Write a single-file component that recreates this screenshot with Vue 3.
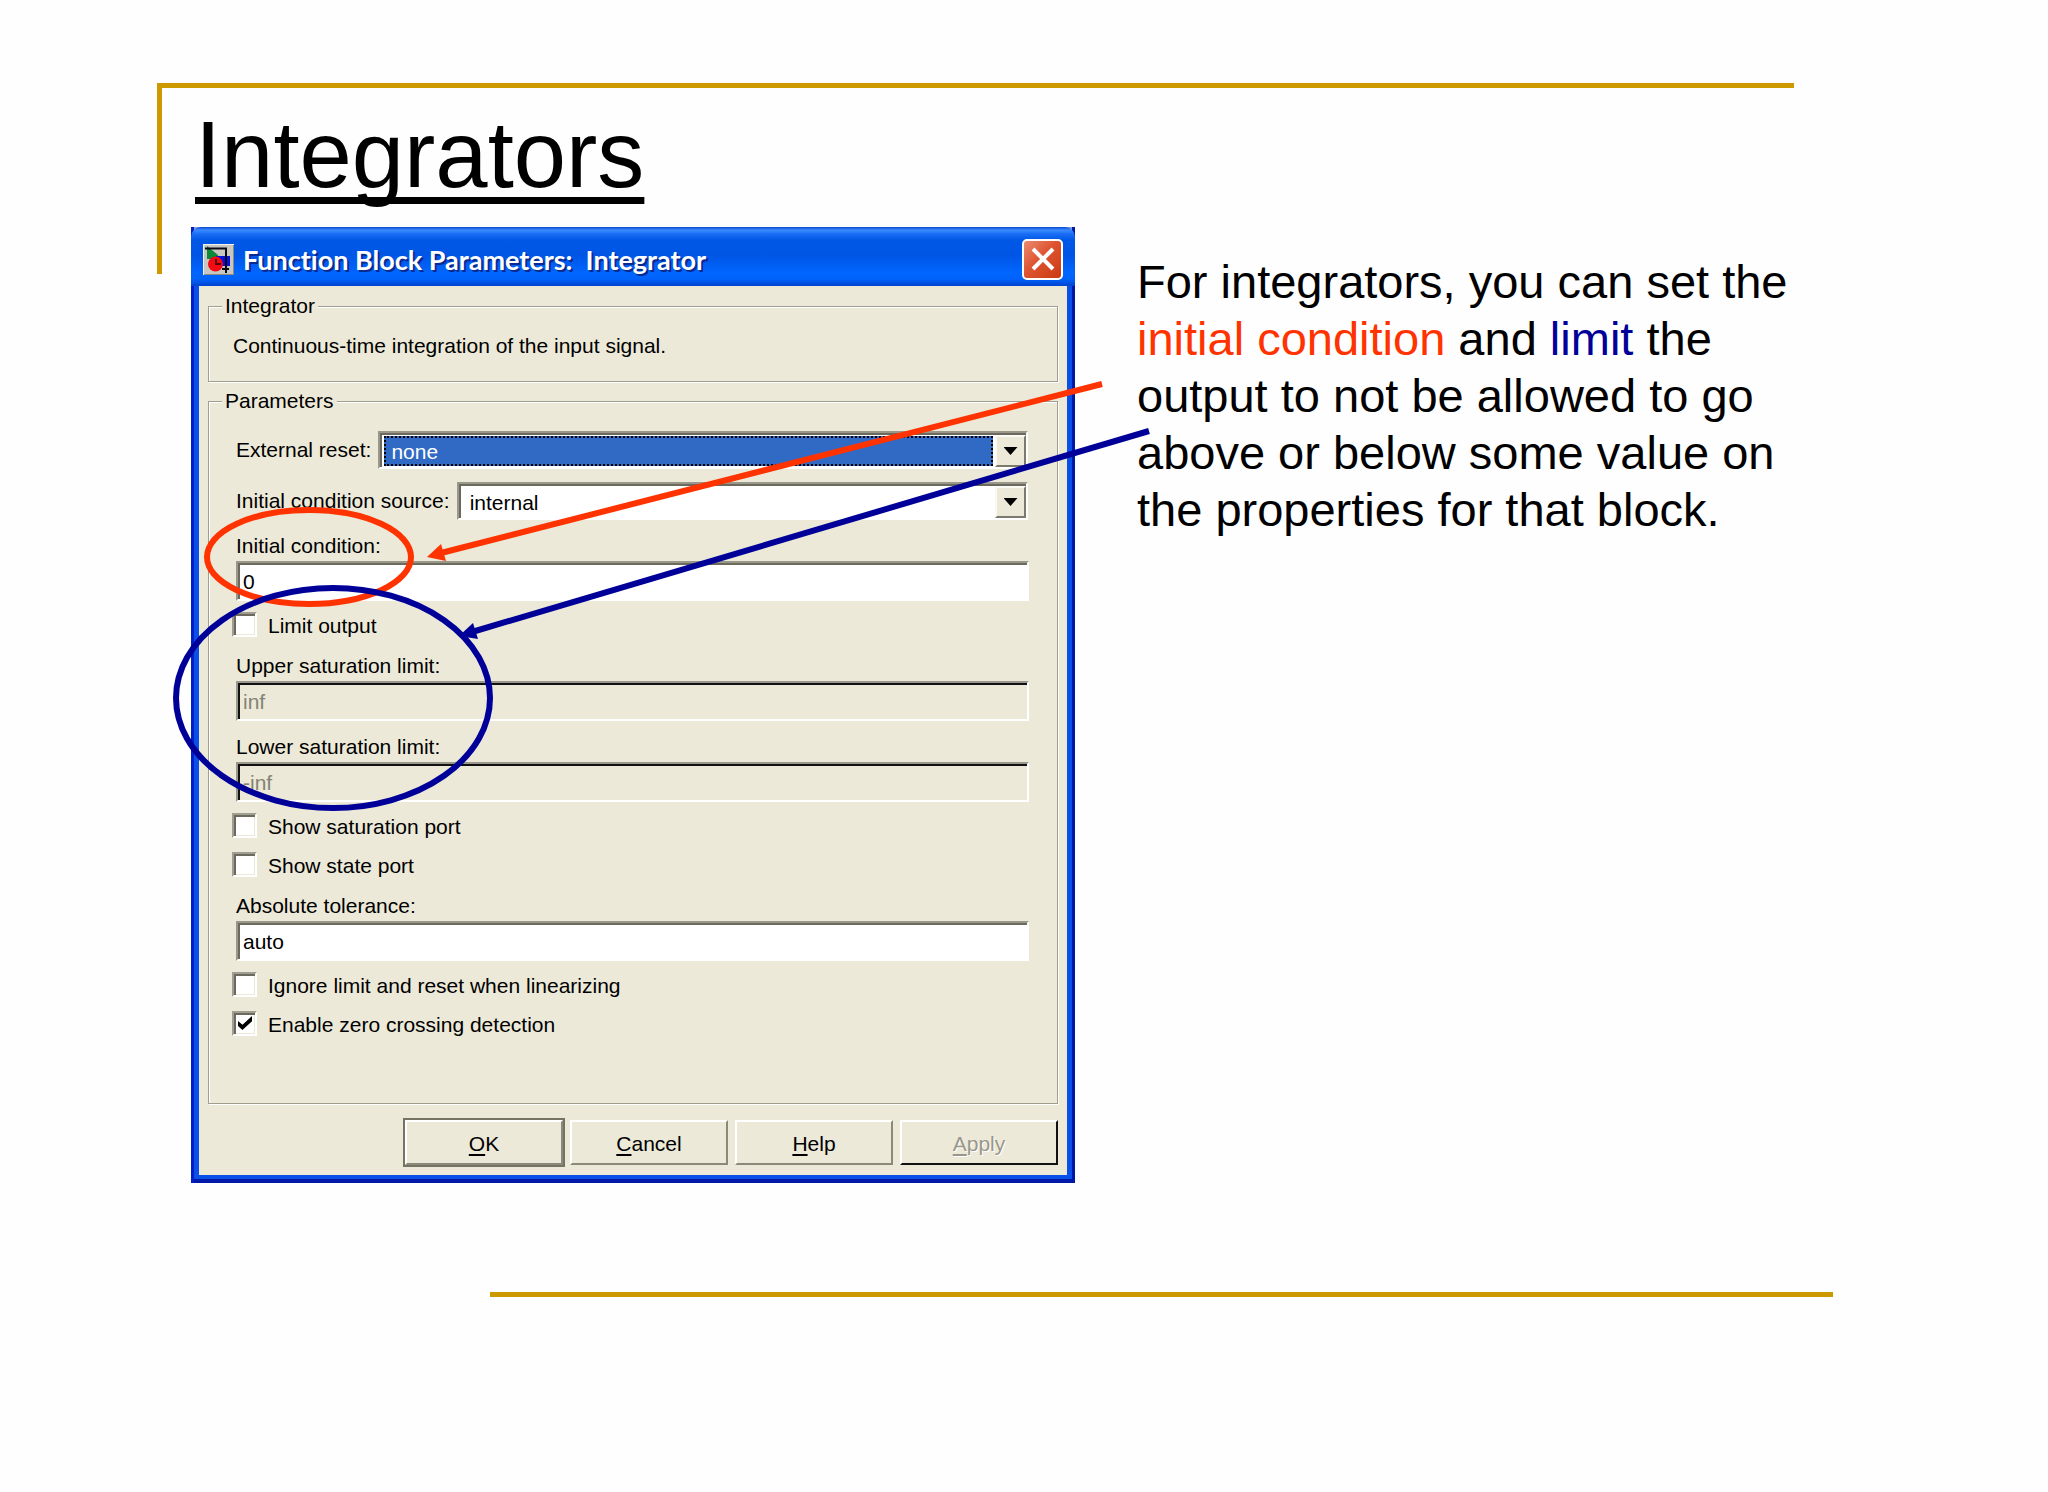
<script setup>
import { ref } from 'vue'

const externalReset = ref('none')
const conditionSource = ref('internal')
const initialCondition = ref('0')
const upperLimit = ref('inf')
const lowerLimit = ref('-inf')
const tolerance = ref('auto')
const limitOutput = ref(false)
const saturationPort = ref(false)
const statePort = ref(false)
const ignoreLimit = ref(false)
const zeroCrossing = ref(true)
</script>

<template>
  <main class="slide">
    <div class="frame">
      <div class="bar"></div>
      <div class="content">
        <h1>Integrators</h1>
        <div class="columns">
          <section class="window" aria-label="Function Block Parameters">
            <header class="titlebar">
              <svg class="app-icon" viewBox="0 0 31 31" aria-hidden="true">
                <rect width="31" height="31" fill="#f4f2ea" />
                <path d="M1 31V30H30V1H31V31Z" fill="#8d8b80" />
                <rect x="1" y="1" width="29" height="29" fill="#c8c7c2" />
                <path d="M4 2L15 11V15H4Z" fill="#0b8a3a" />
                <rect x="13" y="12" width="14" height="10" fill="#0710d8" />
                <circle cx="12.500" cy="20" r="7.500" fill="#f40a12" />
                <path d="M13 15V20H18" fill="none" stroke="#5a0008" stroke-width="2" />
                <path d="M2 4.500H23V26M19 25H26M23 23V29" fill="none" stroke="#0a0a14" stroke-width="2" />
              </svg>
              <h2>Function Block Parameters:&nbsp; Integrator</h2>
              <button class="close" type="button" aria-label="Close">
                <svg viewBox="0 0 24 24" aria-hidden="true">
                  <path d="M2 2L22 22M22 2L2 22" stroke="#fff" stroke-width="4" />
                </svg>
              </button>
            </header>

            <form class="dialog" @submit.prevent>
              <fieldset class="about">
                <legend>Integrator</legend>
                <p>Continuous-time integration of the input signal.</p>
              </fieldset>

              <fieldset class="params">
                <legend>Parameters</legend>
                <div class="select-row">
                  <label for="reset">External reset:</label>
                  <div class="combo">
                    <select id="reset" v-model="externalReset" class="focused">
                      <option>none</option>
                    </select>
                    <span class="drop"></span>
                  </div>
                </div>
                <div class="select-row">
                  <label for="source">Initial condition source:</label>
                  <div class="combo">
                    <select id="source" v-model="conditionSource">
                      <option>internal</option>
                    </select>
                    <span class="drop"></span>
                  </div>
                </div>
                <div class="field">
                  <label for="initial">Initial condition:</label>
                  <input id="initial" v-model="initialCondition" type="text" />
                </div>
                <label class="check"><input v-model="limitOutput" type="checkbox" />Limit output</label>
                <div class="field">
                  <label for="upper">Upper saturation limit:</label>
                  <input id="upper" v-model="upperLimit" type="text" disabled />
                </div>
                <div class="field">
                  <label for="lower">Lower saturation limit:</label>
                  <input id="lower" v-model="lowerLimit" type="text" disabled />
                </div>
                <label class="check"><input v-model="saturationPort" type="checkbox" />Show saturation port</label>
                <label class="check"><input v-model="statePort" type="checkbox" />Show state port</label>
                <div class="field">
                  <label for="tolerance">Absolute tolerance:</label>
                  <input id="tolerance" v-model="tolerance" type="text" />
                </div>
                <label class="check"><input v-model="ignoreLimit" type="checkbox" />Ignore limit and reset when linearizing</label>
                <label class="check"><input v-model="zeroCrossing" type="checkbox" />Enable zero crossing detection</label>
              </fieldset>

              <footer class="actions">
                <button class="default" type="submit"><u>O</u>K</button>
                <button type="button"><u>C</u>ancel</button>
                <button type="button"><u>H</u>elp</button>
                <button type="button" disabled><u>A</u>pply</button>
              </footer>
            </form>
          </section>

          <p class="note">
            For integrators, you can set the <span class="red">initial condition</span> and
            <span class="blue">limit</span> the output to not be allowed to go above or below some
            value on the properties for that block.
          </p>
        </div>
      </div>
    </div>
    <hr class="rule" />

    <svg class="callouts" width="1200" height="900" viewBox="0 0 1200 900" aria-hidden="true">
      <g fill="none" stroke="#ff3300" stroke-width="6">
        <ellipse cx="309" cy="557" rx="102" ry="47" />
        <path d="M1102 384L441 553" />
      </g>
      <path d="M427 557L441 544L446 561Z" fill="#ff3300" />
      <g fill="none" stroke="#000099" stroke-width="6">
        <ellipse cx="333" cy="698" rx="157" ry="110" />
        <path d="M1149 431L472 632" />
      </g>
      <path d="M459 636L473 623L478 639Z" fill="#000099" />
    </svg>
  </main>
</template>

<style>
body {
  margin: 0;
  background: #fefefe;
}
</style>

<style scoped>
* {
  box-sizing: border-box;
}

.slide {
  position: relative;
  padding: 83px 0 60px 157px;
  font-family: "Liberation Sans", Arial, sans-serif;
  color: #000;
}

.frame {
  display: flex;
  margin-right: 254px;
  border-top: 5px solid #cc9900;
}

.bar {
  flex: none;
  width: 5px;
  height: 186px;
  background: #cc9900;
}

.content {
  flex: 1;
  min-width: 0;
  padding: 17px 0 0 29px;
}

h1 {
  margin: 0 0 22px 4px;
  font-size: 94px;
  line-height: 100px;
  font-weight: 400;
  text-decoration: underline;
  text-decoration-thickness: 7px;
  text-underline-offset: 10px;
  text-decoration-skip-ink: none;
}

.columns {
  display: flex;
  align-items: flex-start;
  gap: 62px;
}

.note {
  flex: 1;
  margin: 0;
  padding-top: 26px;
  font-size: 47px;
  line-height: 57px;
}

.red {
  color: #ff3300;
}

.blue {
  color: #000099;
}

.rule {
  height: 5px;
  margin: 109px 215px 0 333px;
  border: 0;
  background: #cc9900;
}

.callouts {
  position: absolute;
  top: 0;
  left: 0;
  pointer-events: none;
}

/* dialog window */
.window {
  flex: 0 1 884px;
  padding: 0 8px 8px;
  background: linear-gradient(#8499dd 12px, #0a4fe8 12px);
  box-shadow: inset 3px 0 #001fc8, inset -3px -4px #0018a8;
}

.titlebar {
  display: flex;
  align-items: center;
  height: 59px;
  margin: 0 -8px;
  padding: 5px 12px 0;
  border-radius: 10px 10px 0 0;
  background: linear-gradient(#0a48d0 0, #3a8bff 3px, #1a6df5 7px, #0058e6 13px, #0055e5 28px, #0066ff 46px, #0062fa 52px, #0043cf 59px);
}

.app-icon {
  flex: none;
  width: 31px;
  height: 31px;
}

h2 {
  flex: 1;
  margin: 0 0 0 9px;
  padding-top: 2px;
  font-family: Lato, "Liberation Sans", sans-serif;
  font-size: 27px;
  line-height: 32px;
  font-weight: 700;
  font-variant-ligatures: none;
  white-space: nowrap;
  color: #fff;
  text-shadow: 2px 2px 0 #0a2a90;
}

.close {
  display: grid;
  place-items: center;
  width: 41px;
  height: 41px;
  padding: 0;
  border: 2px solid #fff;
  border-radius: 5px;
  background: linear-gradient(135deg, #ea8b70, #de5431 45%, #c93a12);
}

.close svg {
  width: 24px;
  height: 24px;
}

.dialog {
  padding: 8px 9px 10px;
  background: #ece9d8;
  font-size: 21px;
  line-height: 24px;
}

fieldset {
  min-width: 0;
  margin: 0;
  padding: 0 13px;
  border: 1px solid #a09e90;
  box-shadow: inset 1px 1px 0 #fff, 1px 1px 0 #fff;
}

legend {
  padding: 0 3px;
  background: #ece9d8;
}

.about {
  height: 88px;
}

.about p {
  margin: 16px 11px 0;
}

.params {
  margin-top: 7px;
  padding: 18px 15px 64px 23px;
}

.params legend {
  margin-left: -10px;
}

.select-row {
  display: flex;
  align-items: center;
  gap: 7px;
  margin: 0 14px 13px 4px;
}

.combo {
  display: flex;
  flex: 1;
  height: 38px;
  border: 2px solid #fff;
  border-top-color: #9a988a;
  border-left-color: #9a988a;
  background: #fff;
  box-shadow: inset 2px 2px 0 #6c6a5c;
}

select {
  flex: 1;
  min-width: 0;
  height: 30px;
  margin: 3px 2px 0 4px;
  padding: 2px 0 0 7px;
  border: 0;
  outline: 0;
  appearance: none;
  background: #fff;
  color: #000;
  font: inherit;
}

.focused {
  padding-left: 5px;
  border: 2px dotted #000;
  background: #316ac5;
  color: #fff;
}

.drop {
  display: grid;
  place-items: center;
  width: 31px;
  height: 32px;
  margin-top: 2px;
  border: 2px solid #7c7a6c;
  border-top-color: #fbfaf4;
  border-left-color: #fbfaf4;
  background: #ece9d8;
  pointer-events: none;
}

.drop::after {
  content: "";
  width: 14px;
  height: 8px;
  background: #000;
  clip-path: polygon(0 0, 100% 0, 50% 100%);
}

.field {
  display: grid;
  gap: 3px;
  margin: 14px 13px 0 4px;
}

.field input {
  width: 100%;
  height: 40px;
  padding: 2px 5px 0;
  border: 2px solid #fff;
  border-top-color: #9a988a;
  border-left-color: #9a988a;
  background: #fff;
  box-shadow: inset 2px 2px 0 #6c6a5c;
  color: #000;
  font: inherit;
}

.field input:disabled {
  background: #ece9d8;
  box-shadow: inset 2px 2px 0 #111;
  color: #858375;
}

.check {
  display: flex;
  gap: 11px;
  margin-top: 11px;
  line-height: 28px;
}

.check input {
  flex: none;
  width: 25px;
  height: 25px;
  margin: 0;
  border: 2px solid #fff;
  border-top-color: #a09e90;
  border-left-color: #a09e90;
  appearance: none;
  background: #fff;
  box-shadow: inset 2px 2px 0 #6c6a5c, inset -1px -1px 0 #ece9d8;
}

.check input:checked::after {
  content: "";
  display: block;
  width: 14px;
  height: 14px;
  margin: 3px 0 0 4px;
  background: #000;
  clip-path: polygon(0 35%, 32% 62%, 100% 0, 100% 38%, 32% 100%, 0 72%);
}

.actions {
  display: flex;
  justify-content: flex-end;
  gap: 7px;
  padding-top: 16px;
}

.actions button {
  width: 158px;
  height: 45px;
  padding: 2px 0 0;
  border: 2px solid #8b897a;
  border-top-color: #fff;
  border-left-color: #fff;
  background: #ece9d8;
  color: #000;
  font: inherit;
}

.actions u {
  text-decoration-thickness: 2px;
  text-underline-offset: 3px;
}

.actions .default {
  box-shadow: 0 0 0 2px #757363;
}

.actions button:disabled {
  border-right-color: #111;
  border-bottom-color: #111;
  color: #99978a;
  text-shadow: 1px 1px 0 #fff;
}
</style>
